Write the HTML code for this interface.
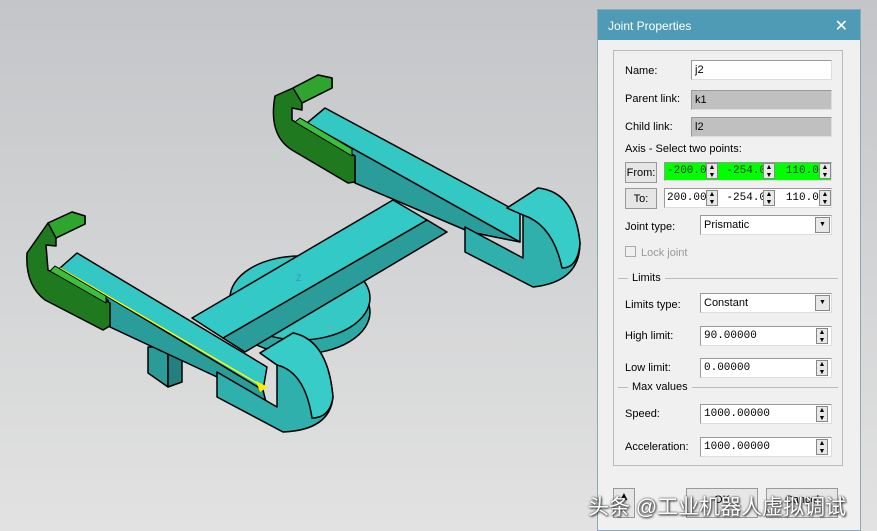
<!DOCTYPE html>
<html><head><meta charset="utf-8"><style>
*{margin:0;padding:0;box-sizing:border-box}
body{width:877px;height:531px;overflow:hidden;background:linear-gradient(180deg,#c3c5c8 0%,#d3d4d5 50%,#e2e2e2 100%);font-family:"Liberation Sans",sans-serif;font-size:11px;color:#000;position:relative}
.dlg{position:absolute;left:597px;top:9px;width:264px;height:522px;background:#f0f0f0;border:1px solid #8aa9b8}
.title{height:30px;background:#4f9bb6;color:#fff;font-size:12px;padding:9px 0 0 10px;position:relative}
.title .x{position:absolute;right:12px;top:6px;font-size:16px}
.grp{position:absolute;left:15px;top:40px;width:230px;height:416px;border:1px solid #bbb}
.a{position:absolute}
.lbl{position:absolute;font-size:11px}
.in{position:absolute;height:20px;background:#fff;border:1px solid #999;border-right-color:#ddd;border-bottom-color:#ddd;font-size:11px;padding:3px 3px}
.ro{background:#c0c0c0}
.sp{position:absolute;width:12px;height:16px;font-size:7px;line-height:8px;text-align:center;background:#e8e8e8;border:1px solid #888}
.btn{position:absolute;background:#e6e6e6;border:1px solid #999;font-size:11px;text-align:center}
.dd{position:absolute;width:15px;height:16px;background:#e8e8e8;border:1px solid #888;font-size:7px;text-align:center;line-height:14px}
.mono{font-family:"Liberation Mono",monospace;font-size:11px}
.grn{background:#00ff00}
.wm{position:absolute;left:588px;top:491px;font-family:"Liberation Sans","Noto Sans CJK SC",sans-serif;font-size:21px;color:#fff;text-shadow:0 0 2px #333,1px 1px 2px #222;white-space:nowrap}
</style></head><body>
<svg class="a" style="left:0;top:0" width="600" height="531" viewBox="0 0 600 531">
<g stroke="#000" stroke-width="1.5" stroke-linejoin="round">
<!-- disc -->
<ellipse cx="300" cy="312" rx="70" ry="42" fill="#2aa8a4"/>
<ellipse cx="300" cy="298" rx="70" ry="42" fill="#36c8c4"/>
<!-- box under -->
<polygon points="148,347 168,347 168,387 148,373" fill="#2b9b98"/>
<polygon points="168,347 182,352 182,382 168,387" fill="#24807e"/>
<!-- cross beam -->
<polygon points="223,338 427,220 447,232 245,352" fill="#2a9c9a"/>
<polygon points="192,318 393,200 427,220 223,338" fill="#33c9c6"/>
<!-- upper rail -->
<polygon points="320,130 520,242 470,232 355,183 355,157" fill="#2a9c9a"/>
<polygon points="307,123 325,108 520,213 520,242" fill="#34c8c4"/>
<!-- upper green hook -->
<path d="M275,96 Q268,135 292,150 L348,183 L355,182 L355,156 L292,120 L292,108 L302,110 L302,103 L332,88 L332,78 L318,75 L293,88 Z" fill="#1f7a1f"/>
<polygon points="293,88 318,75 332,78 332,88 302,103" fill="#2fa52f"/>
<polygon points="295,122 300,118 352,149 352,156" fill="#3cc03c" stroke-width="1"/>
<!-- upper right cyan C -->
<path d="M465,227 L523,258 L523,215 L507,208 L538,188 Q575,192 580,243 Q580,282 533,287 L465,252 Z" fill="#2fb0ac"/>
<path d="M507,208 L538,188 Q575,192 580,243 Q578,268 562,268 Q553,225 523,215 Z" fill="#38ccc8"/>
<!-- lower rail -->
<polygon points="60,268 263,390 268,410 217,377 110,327 108,300" fill="#2a9c9a"/>
<polygon points="60,268 77,253 267,367 263,390" fill="#34c8c4"/>
<line x1="60" y1="268" x2="262" y2="386" stroke="#ffff00" stroke-width="1.3"/>
<polygon points="256,381 268,387 260,392" fill="#ffee00" stroke="none"/>
<!-- lower green hook -->
<path d="M27,253 Q25,285 45,300 L103,330 L110,326 L110,303 L48,270 L46,245 L56,246 L56,238 L85,224 L85,216 L72,212 L48,223 Z" fill="#1f7a1f"/>
<polygon points="48,223 72,212 85,216 85,224 56,238" fill="#2fa52f"/>
<polygon points="50,271 55,266 106,296 106,303" fill="#3cc03c" stroke-width="1"/>
<!-- lower cyan C -->
<path d="M217,372 L277,407 L277,365 L260,353 L293,333 Q328,340 333,397 Q330,430 283,432 L217,397 Z" fill="#2fb0ac"/>
<path d="M260,353 L293,333 Q328,340 333,397 Q330,418 312,418 Q305,372 277,365 Z" fill="#38ccc8"/>
</g>
<text x="296" y="281" font-size="9" fill="#3a8fd0" font-family="Liberation Sans">Z</text>
<text x="327" y="331" font-size="8" fill="#8aa" font-family="Liberation Sans">X</text>
</svg>

<div class="dlg">
<div class="title">Joint Properties<span class="x">✕</span></div>
<div class="grp"></div>
<div class="lbl" style="left:27px;top:55px">Name:</div>
<div class="in" style="left:93px;top:50px;width:141px">j2</div>
<div class="lbl" style="left:27px;top:83px">Parent link:</div>
<div class="in ro" style="left:93px;top:80px;width:141px">k1</div>
<div class="lbl" style="left:27px;top:111px">Child link:</div>
<div class="in ro" style="left:93px;top:107px;width:141px">l2</div>
<div class="lbl" style="left:27px;top:133px">Axis - Select two points:</div>
<div class="btn" style="left:27px;top:152px;width:32px;height:21px;padding-top:4px">From:</div>
<div class="in grn mono" style="left:66px;top:152px;width:168px;height:19px;padding:2px 2px;color:#333">-200.0&nbsp;&nbsp;&nbsp;-254.0&nbsp;&nbsp;&nbsp;110.00</div>
<div class="sp" style="left:108px;top:153px">▲<br>▼</div><div class="sp" style="left:165px;top:153px">▲<br>▼</div><div class="sp" style="left:221px;top:153px">▲<br>▼</div>
<div class="btn" style="left:27px;top:178px;width:32px;height:21px;padding-top:4px">To:</div>
<div class="in mono" style="left:66px;top:178px;width:168px;height:20px;padding:3px 2px">200.00&nbsp;&nbsp;&nbsp;-254.0&nbsp;&nbsp;&nbsp;110.00</div>
<div class="sp" style="left:108px;top:180px">▲<br>▼</div><div class="sp" style="left:165px;top:180px">▲<br>▼</div><div class="sp" style="left:221px;top:180px">▲<br>▼</div>
<div class="lbl" style="left:27px;top:211px">Joint type:</div>
<div class="in" style="left:102px;top:205px;width:132px">Prismatic</div>
<div class="dd" style="left:217px;top:207px">▼</div>
<div class="a" style="left:27px;top:236px;width:11px;height:11px;border:1px solid #aaa"></div>
<div class="lbl" style="left:43px;top:237px;color:#999">Lock joint</div>
<div class="a" style="left:20px;top:268px;width:220px;border-top:1px solid #bbb"></div>
<div class="lbl" style="left:30px;top:262px;background:#f0f0f0;padding:0 4px">Limits</div>
<div class="lbl" style="left:27px;top:289px">Limits type:</div>
<div class="in" style="left:102px;top:283px;width:132px">Constant</div>
<div class="dd" style="left:217px;top:285px">▼</div>
<div class="lbl" style="left:27px;top:320px">High limit:</div>
<div class="in mono" style="left:102px;top:316px;width:132px">90.00000</div>
<div class="sp" style="left:218px;top:318px">▲<br>▼</div>
<div class="lbl" style="left:27px;top:352px">Low limit:</div>
<div class="in mono" style="left:102px;top:348px;width:132px">0.00000</div>
<div class="sp" style="left:218px;top:350px">▲<br>▼</div>
<div class="a" style="left:20px;top:377px;width:220px;border-top:1px solid #bbb"></div>
<div class="lbl" style="left:30px;top:371px;background:#f0f0f0;padding:0 4px">Max values</div>
<div class="lbl" style="left:27px;top:398px">Speed:</div>
<div class="in mono" style="left:102px;top:394px;width:132px">1000.00000</div>
<div class="sp" style="left:218px;top:396px">▲<br>▼</div>
<div class="lbl" style="left:27px;top:431px">Acceleration:</div>
<div class="in mono" style="left:102px;top:427px;width:132px">1000.00000</div>
<div class="sp" style="left:218px;top:429px">▲<br>▼</div>
<div class="btn" style="left:15px;top:478px;width:22px;height:30px;font-size:12px">▲</div>
<div class="btn" style="left:88px;top:478px;width:72px;height:30px;padding-top:5px">OK</div>
<div class="btn" style="left:168px;top:478px;width:72px;height:30px;padding-top:5px">Cancel</div>
</div>
<div class="wm">头条 @工业机器人虚拟调试</div>
</body></html>
